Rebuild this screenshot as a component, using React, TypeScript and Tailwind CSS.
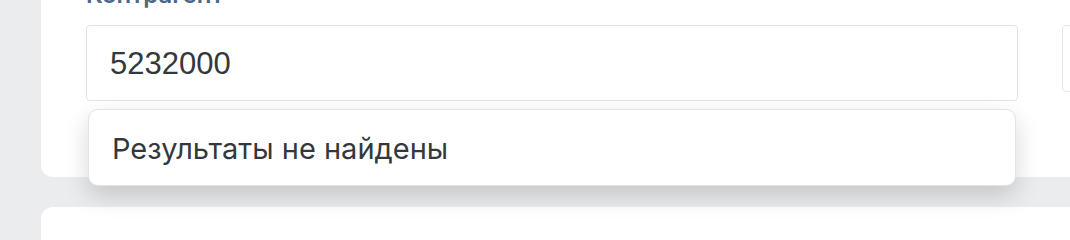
export default function App() {
  return (
    <div className="min-h-screen bg-[#ebecee] pl-[41px] overflow-hidden font-['Inter',sans-serif]">
      {/* Counterparty card */}
      <div className="-mt-[40px] rounded-xl bg-white pl-[45px] pt-[20px] pb-[76px] w-[1100px]">
        <div className="flex gap-[44px]">
          <div className="w-[932px] shrink-0">
            <label className="block text-[24px] leading-[30px] font-semibold text-[#4b6886] mb-[15px]">
              Контрагент
            </label>
            <div className="relative">
              <input
                readOnly
                value="5232000"
                className="block w-full h-[76px] rounded-[4px] border border-[#e2e2e2] bg-white px-[23px] pt-[2px] text-[31px] text-[#33383d] font-['Liberation_Sans',sans-serif] outline-none"
              />
              <div className="absolute left-[2px] right-[2px] top-[84px] z-10 h-[77px] flex items-center rounded-[10px] border border-[#e3e3e3] bg-white px-[23px] shadow-[0_10px_24px_rgba(0,0,0,0.16)]">
                <span className="text-[29px] leading-none text-[#33383d] pt-[2px]">Результаты не найдены</span>
              </div>
            </div>
          </div>
          <div className="w-[200px] shrink-0 pt-[45px]">
            <div className="h-[67px] rounded-[4px] border border-[#e6e6e8] bg-white" />
          </div>
        </div>
      </div>
      {/* Next card */}
      <div className="mt-[30px] h-[120px] rounded-xl bg-white w-[1100px]" />
    </div>
  );
}
